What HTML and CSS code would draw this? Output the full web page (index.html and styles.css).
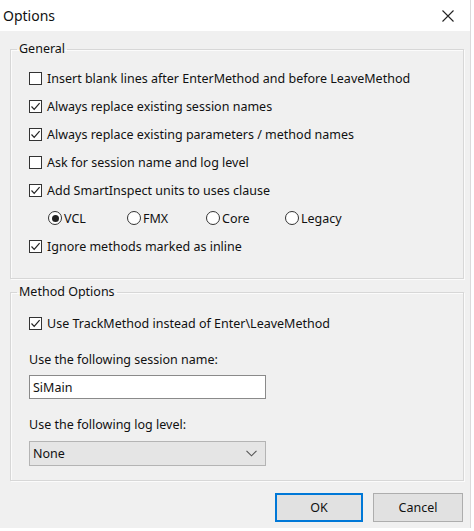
FILE: index.html
```html
<!DOCTYPE html>
<html>
<head>
<meta charset="utf-8">
<title>Options</title>
<link rel="stylesheet" href="styles.css">
</head>
<body>
<div class="window">
  <div class="titlebar">
    <span class="title">Options</span>
    <svg class="close" width="12" height="12" viewBox="0 0 12 12"><path d="M0.5 0.5 L11.5 11.5 M11.5 0.5 L0.5 11.5" stroke="#222" stroke-width="1.1" fill="none"/></svg>
  </div>
  <div class="content">
    <fieldset class="group general">
      <legend>General</legend>
      <div class="row"><span class="cb"></span><span>Insert blank lines after EnterMethod and before LeaveMethod</span></div>
      <div class="row"><span class="cb"><svg width="11" height="11" viewBox="0 0 11 11"><path d="M1.5 5.5 L4.2 8.3 L9.6 2.2" stroke="#222" stroke-width="1.2" fill="none"/></svg></span><span>Always replace existing session names</span></div>
      <div class="row"><span class="cb"><svg width="11" height="11" viewBox="0 0 11 11"><path d="M1.5 5.5 L4.2 8.3 L9.6 2.2" stroke="#222" stroke-width="1.2" fill="none"/></svg></span><span>Always replace existing parameters / method names</span></div>
      <div class="row"><span class="cb"></span><span>Ask for session name and log level</span></div>
      <div class="row"><span class="cb"><svg width="11" height="11" viewBox="0 0 11 11"><path d="M1.5 5.5 L4.2 8.3 L9.6 2.2" stroke="#222" stroke-width="1.2" fill="none"/></svg></span><span>Add SmartInspect units to uses clause</span></div>
      <div class="row radios">
        <div class="radio"><span class="rb on"></span><span>VCL</span></div>
        <div class="radio"><span class="rb"></span><span>FMX</span></div>
        <div class="radio"><span class="rb"></span><span>Core</span></div>
        <div class="radio"><span class="rb"></span><span>Legacy</span></div>
      </div>
      <div class="row"><span class="cb"><svg width="11" height="11" viewBox="0 0 11 11"><path d="M1.5 5.5 L4.2 8.3 L9.6 2.2" stroke="#222" stroke-width="1.2" fill="none"/></svg></span><span>Ignore methods marked as inline</span></div>
    </fieldset>
    <fieldset class="group method">
      <legend>Method Options</legend>
      <div class="row"><span class="cb"><svg width="11" height="11" viewBox="0 0 11 11"><path d="M1.5 5.5 L4.2 8.3 L9.6 2.2" stroke="#222" stroke-width="1.2" fill="none"/></svg></span><span>Use TrackMethod instead of Enter\LeaveMethod</span></div>
      <div class="label first">Use the following session name:</div>
      <div class="textbox">SiMain</div>
      <div class="label second">Use the following log level:</div>
      <div class="select"><span>None</span><svg width="11" height="7" viewBox="0 0 11 7"><path d="M0.5 0.8 L5.5 5.8 L10.5 0.8" stroke="#555" stroke-width="1.1" fill="none"/></svg></div>
    </fieldset>
    <div class="buttons">
      <div class="btn default">OK</div>
      <div class="btn">Cancel</div>
    </div>
  </div>
</div>
</body>
</html>
```
FILE: styles.css
```css
html, body {
  margin: 0;
  padding: 0;
  background: #ffffff;
}
body {
  font-family: "Noto Sans", "Open Sans", sans-serif;
  font-size: 12.5px;
  color: #111;
}
.window {
  width: 470px;
  height: 528px;
  background: #f0f0f0;
  border-right: 1px solid #dadada;
  display: flex;
  flex-direction: column;
}
.titlebar {
  height: 31px;
  flex: none;
  background: #ffffff;
  display: flex;
  align-items: center;
  justify-content: space-between;
  padding: 0 16px 0 3px;
}
.title {
  font-size: 14px;
  color: #111;
}
.close {
  display: block;
}
.content {
  flex: 1;
  display: flex;
  flex-direction: column;
  padding: 0 0 0 10px;
}
.group {
  margin: 0;
  width: 454px;
  box-sizing: border-box;
  border: 1px solid #d7d7d7;
  box-shadow: inset 1px 1px 0 #fbfbfb, 1px 1px 0 #fbfbfb;
  padding: 0 0 0 18px;
  min-width: 0;
}
.group legend {
  padding: 0 2px;
  margin-left: -12px;
  line-height: 16px;
  height: 16px;
  font-size: 12.5px;
}
.general {
  margin-top: 10px;
  padding-top: 7px;
  padding-bottom: 18px;
}
.method {
  margin-top: 5px;
  padding-top: 9px;
  padding-bottom: 14px;
}
.row {
  height: 28px;
  display: flex;
  align-items: center;
  gap: 5px;
  white-space: nowrap;
}
.cb {
  width: 13px;
  height: 13px;
  box-sizing: border-box;
  border: 1px solid #333;
  background: #fff;
  display: flex;
  align-items: center;
  justify-content: center;
  flex: none;
}
.cb svg {
  display: block;
}
.radios {
  padding-left: 19px;
  gap: 0;
}
.radio {
  width: 79px;
  display: flex;
  align-items: center;
  gap: 2px;
}
.rb {
  width: 14px;
  height: 14px;
  box-sizing: border-box;
  border: 1px solid #333;
  border-radius: 50%;
  background: #fff;
  display: flex;
  align-items: center;
  justify-content: center;
  flex: none;
}
.rb.on::after {
  content: "";
  width: 7px;
  height: 7px;
  border-radius: 50%;
  background: #222;
}
.label {
  line-height: 16px;
  height: 16px;
}
.label.first {
  margin-top: 15px;
}
.label.second {
  margin-top: 18px;
}
.textbox {
  margin-top: 7px;
  width: 237px;
  height: 24px;
  box-sizing: border-box;
  border: 1px solid #8a8a8a;
  background: #fff;
  display: flex;
  align-items: center;
  padding-left: 3px;
}
.select {
  margin-top: 8px;
  width: 237px;
  height: 25px;
  box-sizing: border-box;
  border: 1px solid #b4b4b4;
  background: #e5e5e5;
  display: flex;
  align-items: center;
  justify-content: space-between;
  padding: 0 8px 0 3px;
}
.select svg {
  display: block;
}
.buttons {
  margin-top: 12px;
  display: flex;
  justify-content: flex-end;
  gap: 10px;
  padding-right: 7px;
}
.btn {
  width: 88px;
  height: 29px;
  box-sizing: border-box;
  border: 1px solid #adadad;
  background: #e1e1e1;
  display: flex;
  align-items: center;
  justify-content: center;
}
.btn + .btn {
  width: 90px;
}
.btn.default {
  border: 2px solid #0078d7;
}
```
